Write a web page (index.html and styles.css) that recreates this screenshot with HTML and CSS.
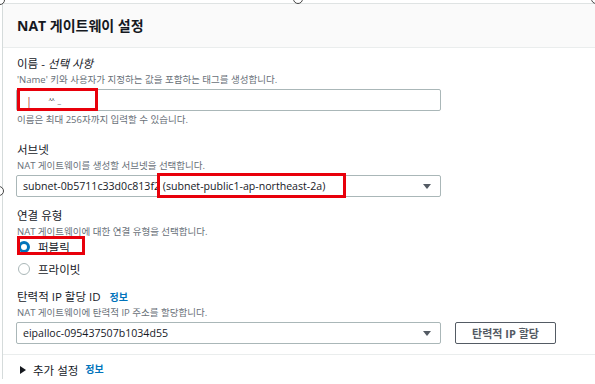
FILE: index.html
```html
<!DOCTYPE html>
<html lang="ko">
<head>
<meta charset="utf-8">
<link rel="stylesheet" href="styles.css">
</head>
<body>
<div class="card">
  <div class="header"><h2 class="title">NAT 게이트웨이 설정</h2></div>
  <div class="body">
    <div class="field f-name">
      <div class="label">이름 - <i>선택 사항</i></div>
      <div class="desc">'Name' 키와 사용자가 지정하는 값을 포함하는 태그를 생성합니다.</div>
      <div class="input"><span class="redact">|</span><span class="redact2">ᄊ _</span></div>
      <div class="hint">이름은 최대 256자까지 입력할 수 있습니다.</div>
      <div class="mark mark-name"></div>
    </div>
    <div class="field f-subnet">
      <div class="label">서브넷</div>
      <div class="desc">NAT 게이트웨이를 생성할 서브넷을 선택합니다.</div>
      <div class="select"><span>subnet-0b5711c33d0c813f2 (subnet-public1-ap-northeast-2a)</span><span class="caret"></span></div>
      <div class="mark mark-subnet"></div>
    </div>
    <div class="field f-type">
      <div class="label">연결 유형</div>
      <div class="desc">NAT 게이트웨이에 대한 연결 유형을 선택합니다.</div>
      <div class="radio-row"><span class="radio on"></span><span>퍼블릭</span></div>
      <div class="radio-row"><span class="radio"></span><span>프라이빗</span></div>
      <div class="mark mark-type"></div>
    </div>
    <div class="field f-eip">
      <div class="label">탄력적 IP 할당 ID <a class="info">정보</a></div>
      <div class="desc">NAT 게이트웨이에 탄력적 IP 주소를 할당합니다.</div>
      <div class="eip-row">
        <div class="select"><span>eipalloc-095437507b1034d55</span><span class="caret"></span></div>
        <button class="btn">탄력적 IP 할당</button>
      </div>
    </div>
  </div>
  <div class="more"><span class="tri"></span><span>추가 설정</span><a class="info">정보</a></div>
</div>
<span class="handle h1"></span>
<span class="handle h2"></span>
<span class="handle h3"></span>
<span class="handle h4"></span>
</body>
</html>
```
FILE: styles.css
```css
html, body { margin: 0; padding: 0; background: #fff; }
body {
  font-family: "Open Sans", "Noto Sans CJK KR", sans-serif;
  color: #16191f;
  width: 595px; height: 384px; overflow: hidden; position: relative;
}
.card {
  margin: 3px 0 0 2px;
  width: 620px;
  border-left: 1px solid #d5dbdb;
  border-top: 1px solid #dfe3e3;
  background: #fff;
}
.header {
  height: 43px;
  background: #fafafa;
  border-bottom: 1px solid #eaeded;
  display: flex; align-items: center;
  padding-left: 14px;
}
.title { margin: 0; font-size: 14px; font-weight: 700; line-height: 18px; color: #16191f; }
.body { padding: 8px 0 0 13px; }
.field { position: relative; }
.label { font-size: 11.5px; line-height: 16px; height: 16px; padding-left: 1px; }
.label i { font-style: italic; }
.desc { font-size: 9.5px; line-height: 14px; color: #687078; padding-left: 1px; margin-top: 1px; }
.hint { font-size: 9.5px; line-height: 14px; color: #687078; margin-top: 2px; padding-left: 1px; }
.input, .select {
  height: 20px;
  border: 1px solid #aab7b8;
  border-radius: 2px;
  margin-top: 2px;
  display: flex; align-items: center;
  padding-left: 6px; box-sizing: content-box;
  font-size: 10.6px;
}
.input { width: 417px; }
.select { width: 417px; justify-content: space-between; padding-right: 0; position: relative; }
.select .caret {
  width: 0; height: 0;
  border-left: 4px solid transparent; border-right: 4px solid transparent;
  border-top: 5px solid #545b64;
  margin-right: 9px;
}
.redact { color: #b03030; font-size: 11px; margin-left: 3px; }
.redact2 { color: #555; font-size: 8px; margin-left: 16px; }
.f-subnet { margin-top: 15px; }
.f-type { margin-top: 11px; }
.f-eip { margin-top: 13px; }
.radio-row { display: flex; align-items: center; height: 14px; font-size: 11.5px; margin-top: 1px; padding-left: 2px; }
.radio-row + .radio-row { margin-top: 8px; }
.radio {
  width: 10px; height: 10px; border-radius: 50%;
  border: 1px solid #aab7b8; margin-right: 8px; box-sizing: content-box;
}
.radio.on { width: 6px; height: 6px; border: 3px solid #0073bb; }
.eip-row { display: flex; align-items: flex-start; }
.eip-row .select { width: 417px; }
.btn {
  margin: 2px 0 0 14px;
  width: 101px; height: 22px;
  border: 1px solid #545b64; border-radius: 2px;
  background: #fff; color: #545b64;
  font-family: inherit; font-size: 11px; font-weight: 700;
  padding: 0;
}
.info { color: #0073bb; font-size: 10px; font-weight: 700; margin-left: 6px; }
.more {
  margin-top: 10px;
  border-top: 1px solid #eaeded;
  padding: 6px 0 0 17px;
  display: flex; align-items: center;
  font-size: 11.5px; height: 18px;
}
.more .tri {
  width: 0; height: 0;
  border-top: 4px solid transparent; border-bottom: 4px solid transparent;
  border-left: 6px solid #16191f;
  margin-right: 7px;
}
.more .info { margin-left: 7px; position: relative; top: -2px; }
.mark { position: absolute; border: 3px solid #e8000b; box-sizing: border-box; }
.mark-name { left: 1px; top: 32px; width: 81px; height: 23px; }
.mark-subnet { left: 141px; top: 31px; width: 189px; height: 25px; }
.mark-type { left: 1px; top: 28px; width: 68px; height: 19px; }
.handle {
  position: absolute; width: 8px; height: 8px; border-radius: 50%;
  border: 1px solid #444; background: #fff;
}
.h1 { left: -5px; top: -5px; }
.h2 { left: 293px; top: -6px; }
.h3 { left: 591px; top: -6px; }
.h4 { left: -6px; top: 186px; }
```
